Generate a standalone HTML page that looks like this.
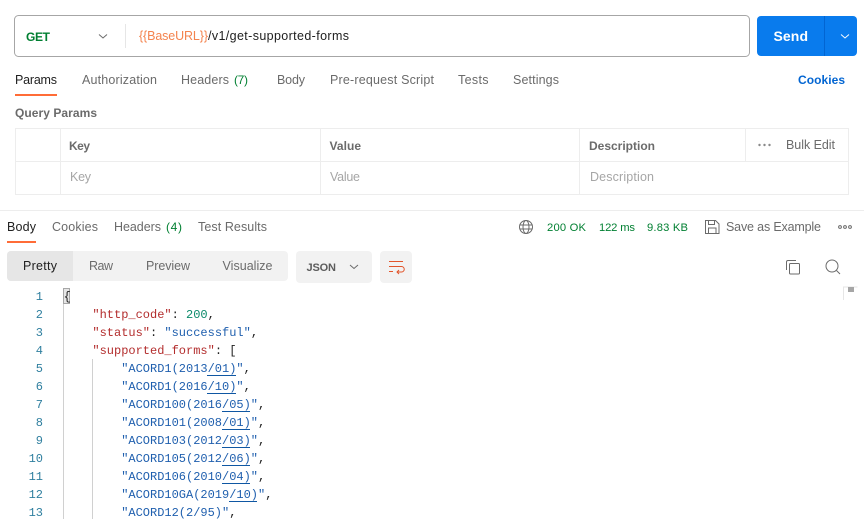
<!DOCTYPE html>
<html><head><meta charset="utf-8"><style>
html,body{margin:0;padding:0;background:#fff;width:864px;height:526px;overflow:hidden}
svg{display:block}
text{font-family:"Liberation Sans",sans-serif;font-size:12.5px;fill:#6b6b6b}
.b{font-weight:bold;font-size:12px}
.c{font-family:"Liberation Mono",monospace;font-size:12px;fill:#212121;white-space:pre}
.n{fill:#2f7f9f;text-anchor:end}
.k{fill:#b32d2d}.s{fill:#1f5fae}.u{fill:#0b8a6a}
.ph{fill:#a6a6a6}
.g{fill:#007f31;font-size:12px}
.g2{fill:#007f31;font-size:11.200px}
.ln{stroke:#ededed;stroke-width:1}
.ul{stroke:#0f57a3;stroke-width:1}
.ic{fill:none;stroke:#6b6b6b;stroke-width:1}
</style></head><body>
<svg width="864" height="526" viewBox="0 0 864 526" xmlns="http://www.w3.org/2000/svg">
<rect x="14.5" y="15.5" width="735" height="41" rx="4" fill="#fff" stroke="#a6a6a6"/>
<text x="26" y="41" class="b" style="fill:#007f31" textLength="24">GET</text>
<path d="M99 34.5l4 3.5 4-3.5" class="ic"/>
<line x1="125.500" y1="24" x2="125.500" y2="48" stroke="#e6e6e6"/>
<text x="139" y="40" style="fill:#f4844f" textLength="69">{{BaseURL}}</text>
<text x="208" y="40" style="fill:#212121" textLength="141">/v1/get-supported-forms</text>
<rect x="757" y="16" width="100" height="40" rx="4" fill="#097bed"/>
<line x1="824.500" y1="16" x2="824.500" y2="56" stroke="#0265d2"/>
<text x="773.500" y="41" class="b" style="fill:#fff;font-size:14px" textLength="34.500">Send</text>
<path d="M841 34.500l4 3.500 4-3.500" fill="none" stroke="#fff" stroke-width="0.900"/>

<text x="15" y="84" style="fill:#212121" textLength="42">Params</text>
<rect x="15" y="94" width="42" height="2" fill="#ff6c37"/>
<text x="82" y="84" textLength="75">Authorization</text>
<text x="181" y="84" textLength="48">Headers</text>
<text x="234" y="84" class="g" textLength="14">(7)</text>
<text x="277" y="84" textLength="28">Body</text>
<text x="330" y="84" textLength="104">Pre-request Script</text>
<text x="458" y="84" textLength="30.500">Tests</text>
<text x="513" y="84" textLength="46">Settings</text>
<text x="798" y="84" class="b" style="fill:#0265d2" textLength="47">Cookies</text>
<text x="15" y="117" class="b" textLength="82">Query Params</text>

<rect x="15.500" y="128.500" width="833" height="66" fill="none" stroke="#ededed"/>
<line class="ln" x1="15" y1="161.500" x2="849" y2="161.500"/>
<line class="ln" x1="60.500" y1="128" x2="60.500" y2="195"/>
<line class="ln" x1="320.500" y1="128" x2="320.500" y2="195"/>
<line class="ln" x1="579.500" y1="128" x2="579.500" y2="195"/>
<line class="ln" x1="745.500" y1="128" x2="745.500" y2="162"/>
<text x="69" y="150" class="b" textLength="21">Key</text>
<text x="329.500" y="150" class="b" textLength="31.500">Value</text>
<text x="589" y="150" class="b" textLength="66">Description</text>
<g fill="#8a8a8a"><circle cx="759.500" cy="145" r="1.200"/><circle cx="764.500" cy="145" r="1.200"/><circle cx="769.500" cy="145" r="1.200"/></g>
<text x="786" y="149" textLength="49">Bulk Edit</text>
<text x="70" y="181" class="ph" textLength="21">Key</text>
<text x="330" y="181" class="ph" textLength="30">Value</text>
<text x="590" y="181" class="ph" textLength="64">Description</text>
<line class="ln" x1="0" y1="210.500" x2="864" y2="210.500"/>

<text x="7" y="231" style="fill:#212121" textLength="29">Body</text>
<rect x="7" y="241" width="29" height="2" fill="#ff6c37"/>
<text x="52" y="231" textLength="46">Cookies</text>
<text x="114" y="231" textLength="47">Headers</text>
<text x="166" y="231" class="g" textLength="16">(4)</text>
<text x="198" y="231" textLength="69">Test Results</text>

<g class="ic" stroke-width="0.900"><circle cx="526" cy="227" r="6.500"/><ellipse cx="526" cy="227" rx="3" ry="6.500"/><path d="M520 225h12M520 229h12"/></g>
<text x="547" y="231" class="g2" textLength="39">200 OK</text>
<text x="599" y="231" class="g2" textLength="36">122 ms</text>
<text x="647" y="231" class="g2" textLength="41">9.83 KB</text>
<path class="ic" d="M705.500 220.500h10l3.500 3.500v9.500h-13.500zM708.500 220.500v4h6v-4M708.500 233.500v-5.500h7.500v5.500"/>
<text x="726" y="231" textLength="95">Save as Example</text>
<g class="ic" stroke-width="0.800"><circle cx="840" cy="227" r="1.400"/><circle cx="845" cy="227" r="1.400"/><circle cx="850" cy="227" r="1.400"/></g>

<rect x="7" y="251" width="281" height="30" rx="4" fill="#f2f2f2"/>
<path d="M11 251h62v30h-62a4 4 0 0 1-4-4v-22a4 4 0 0 1 4-4z" fill="#e6e6e6"/>
<text x="23" y="270" style="fill:#212121" textLength="34">Pretty</text>
<text x="89" y="270" textLength="24">Raw</text>
<text x="146" y="270" textLength="44">Preview</text>
<text x="222.500" y="270" textLength="50">Visualize</text>
<rect x="296" y="251" width="76" height="32" rx="4" fill="#f2f2f2"/>
<text x="306.500" y="271" class="b" style="font-size:11px;fill:#5c5c5c" textLength="29.500">JSON</text>
<path class="ic" d="M350 265l4 3.500 4-3.500"/>
<rect x="380" y="251" width="32" height="32" rx="4" fill="#f2f2f2"/>
<path d="M389 261.500h14M389 266.500h12.500a2.500 2.500 0 0 1 0 5.500h-4M399 270l-2 2 2 2M389 271.500h4" fill="none" stroke="#e2552b"/>

<path class="ic" d="M786.500 270v-8a1.500 1.500 0 0 1 1.500-1.500h8"/>
<rect x="789.500" y="263.500" width="10" height="10.500" rx="1" class="ic"/>
<circle cx="832" cy="266" r="6" class="ic"/>
<path class="ic" d="M836.500 270.500l3.500 3.500"/>

<path d="M843.500 300v-13h14" fill="none" stroke="#e6e6e6"/>
<rect x="848" y="287" width="6" height="5" fill="#a6a6a6"/>

<line x1="63.500" y1="288" x2="63.500" y2="519" stroke="#d0d0d0"/>
<line x1="92.500" y1="359" x2="92.500" y2="519" stroke="#d0d0d0"/>
<rect x="63.500" y="288.500" width="6" height="15" fill="#e6e6e6" stroke="#a6a6a6"/>

<text class="c n" x="43" y="300">1</text>
<text class="c n" x="43" y="318">2</text>
<text class="c n" x="43" y="336">3</text>
<text class="c n" x="43" y="354">4</text>
<text class="c n" x="43" y="372">5</text>
<text class="c n" x="43" y="390">6</text>
<text class="c n" x="43" y="408">7</text>
<text class="c n" x="43" y="426">8</text>
<text class="c n" x="43" y="444">9</text>
<text class="c n" x="43" y="462">10</text>
<text class="c n" x="43" y="480">11</text>
<text class="c n" x="43" y="498">12</text>
<text class="c n" x="43" y="516">13</text>

<text class="c" x="63.600" y="300">{</text>
<text class="c" x="92.400" y="318"><tspan class="k">"http_code"</tspan>: <tspan class="u">200</tspan>,</text>
<text class="c" x="92.400" y="336"><tspan class="k">"status"</tspan>: <tspan class="s">"successful"</tspan>,</text>
<text class="c" x="92.400" y="354"><tspan class="k">"supported_forms"</tspan>: [</text>
<text class="c" x="121.200" y="372"><tspan class="s">"ACORD1(2013/01)"</tspan>,</text>
<text class="c" x="121.200" y="390"><tspan class="s">"ACORD1(2016/10)"</tspan>,</text>
<text class="c" x="121.200" y="408"><tspan class="s">"ACORD100(2016/05)"</tspan>,</text>
<text class="c" x="121.200" y="426"><tspan class="s">"ACORD101(2008/01)"</tspan>,</text>
<text class="c" x="121.200" y="444"><tspan class="s">"ACORD103(2012/03)"</tspan>,</text>
<text class="c" x="121.200" y="462"><tspan class="s">"ACORD105(2012/06)"</tspan>,</text>
<text class="c" x="121.200" y="480"><tspan class="s">"ACORD106(2010/04)"</tspan>,</text>
<text class="c" x="121.200" y="498"><tspan class="s">"ACORD10GA(2019/10)"</tspan>,</text>
<text class="c" x="121.200" y="516"><tspan class="s">"ACORD12(2/95)"</tspan>,</text>
<line class="ul" x1="207" y1="375.500" x2="236" y2="375.500"/>
<line class="ul" x1="207" y1="393.500" x2="236" y2="393.500"/>
<line class="ul" x1="222" y1="411.500" x2="250" y2="411.500"/>
<line class="ul" x1="222" y1="429.500" x2="250" y2="429.500"/>
<line class="ul" x1="222" y1="447.500" x2="250" y2="447.500"/>
<line class="ul" x1="222" y1="465.500" x2="250" y2="465.500"/>
<line class="ul" x1="222" y1="483.500" x2="250" y2="483.500"/>
<line class="ul" x1="229" y1="501.500" x2="257" y2="501.500"/>
</svg>
</body></html>
